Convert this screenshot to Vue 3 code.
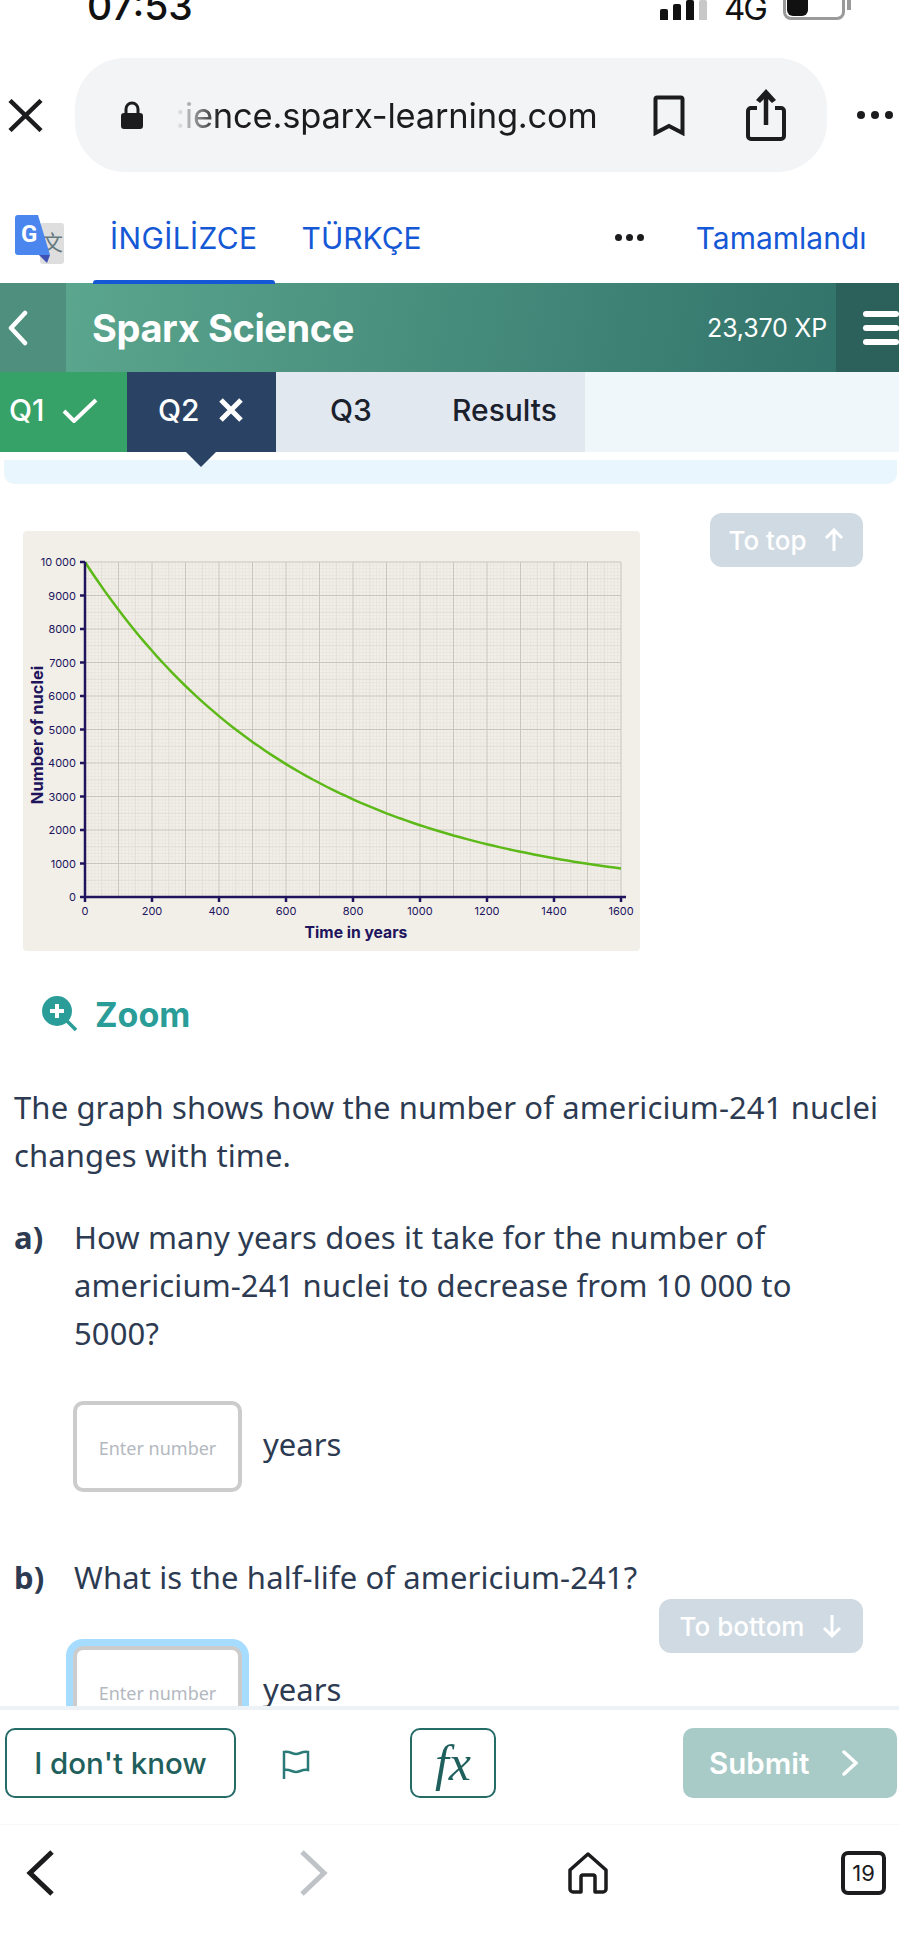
<template>
  <div class="page">
    <!-- phone status bar -->
    <div class="status">
      <span class="clock">07:53</span>
      <div class="signal">
        <i style="height: 11px"></i>
        <i style="height: 16px"></i>
        <i style="height: 20px"></i>
        <i class="off" style="height: 20px"></i>
      </div>
      <span class="net">4G</span>
      <div class="battery"><b></b></div>
      <div class="nub"></div>
    </div>

    <!-- browser address row -->
    <div class="browser">
      <svg class="close" width="35" height="33" viewBox="0 0 35 33">
        <path d="M2 1.5 33 31.5M33 1.5 2 31.5" stroke="#1c1c1e" stroke-width="4.5" fill="none" />
      </svg>
      <div class="pill">
        <svg width="24" height="28" viewBox="0 0 24 28">
          <path d="M6 13V8a6 6 0 0 1 12 0v5" stroke="#1c1c1e" stroke-width="3" fill="none" />
          <rect x="1" y="12" width="22" height="16" rx="3" fill="#1c1c1e" />
        </svg>
        <span class="url">:ience.sparx-learning.com</span>
        <svg class="bookmark" width="32" height="41" viewBox="0 0 32 41">
          <path d="M2.5 38V4a1.5 1.5 0 0 1 1.500-1.500h24a1.500 1.500 0 0 1 1.500 1.500v34L16 31z" fill="none" stroke="#1c1c1e" stroke-width="4" />
        </svg>
        <svg class="share" width="40" height="52" viewBox="0 0 40 52">
          <path d="M11 19H5a3 3 0 0 0-3 3v25a3 3 0 0 0 3 3h30a3 3 0 0 0 3-3V22a3 3 0 0 0-3-3h-6" fill="none" stroke="#1c1c1e" stroke-width="4" />
          <path d="M20 36V4" stroke="#1c1c1e" stroke-width="4.500" fill="none" />
          <path d="M20 0 30 11 26 14 20 8 14 14 10 11z" fill="#1c1c1e" />
        </svg>
      </div>
      <div class="dots big"><i></i><i></i><i></i></div>
    </div>

    <!-- page translation row -->
    <div class="translate">
      <div class="gt">
        <div class="gt-back">文</div>
        <div class="gt-front">G</div>
        <div class="gt-fold"></div>
      </div>
      <div class="lang active">İNGİLİZCE</div>
      <div class="lang second">TÜRKÇE</div>
      <div class="dots small"><i></i><i></i><i></i></div>
      <div class="done">Tamamlandı</div>
    </div>

    <!-- app header -->
    <div class="header">
      <div class="back">
        <svg width="22" height="36" viewBox="0 0 22 36">
          <path d="M18 3 4 18l14 15" fill="none" stroke="#fff" stroke-width="4.500" stroke-linecap="round" stroke-linejoin="round" />
        </svg>
      </div>
      <div class="brand">Sparx Science</div>
      <div class="xp">23,370 XP</div>
      <div class="menu"><i></i><i></i><i></i></div>
    </div>

    <!-- question tabs -->
    <div class="tabs">
      <div class="tab q1">
        <span>Q1</span>
        <svg width="36" height="25" viewBox="0 0 36 25">
          <path d="M2 13 12 23 34 2" fill="none" stroke="#fff" stroke-width="4" />
        </svg>
      </div>
      <div class="tab q2">
        <span>Q2</span>
        <svg width="26" height="24" viewBox="0 0 26 24">
          <path d="M3 2 23 22M23 2 3 22" fill="none" stroke="#fff" stroke-width="5" />
        </svg>
        <div class="caret"></div>
      </div>
      <div class="tab rest">
        <span class="q3">Q3</span>
        <span>Results</span>
      </div>
    </div>
    <div class="strip"></div>

    <!-- question body -->
    <div class="main">
      <button class="float to-top">To top
        <svg width="20" height="24" viewBox="0 0 20 24">
          <path d="M10 23V2M2 10l8-8 8 8" fill="none" stroke="#fff" stroke-width="3" />
        </svg>
      </button>
      <button class="float to-bottom">To bottom
        <svg width="20" height="24" viewBox="0 0 20 24">
          <path d="M10 1v21M2 14l8 8 8-8" fill="none" stroke="#fff" stroke-width="3" />
        </svg>
      </button>

      <svg class="graph" width="617" height="420" viewBox="0 0 617 420">
        <rect width="617" height="420" rx="4" fill="#f2efe9" />
        <path :d="gridFine" stroke="#eae6df" stroke-width="1" fill="none" />
        <path :d="gridMid" stroke="#e1ddd6" stroke-width="1" fill="none" />
        <path :d="gridMajor" stroke="#c8c5bf" stroke-width="1" fill="none" />
        <path :d="curve" stroke="#5cb917" stroke-width="2.500" fill="none" />
        <path :d="axes" stroke="#20145c" stroke-width="2.500" fill="none" />
        <text
          v-for="t in yTicks"
          :key="t.label"
          class="tick"
          x="53"
          :y="t.y + 4"
          text-anchor="end"
        >{{ t.label }}</text>
        <text
          v-for="t in xTicks"
          :key="t.label"
          class="tick"
          :x="t.x"
          y="384"
          text-anchor="middle"
        >{{ t.label }}</text>
        <text class="title" x="333" y="407" text-anchor="middle">Time in years</text>
        <text class="title tall" transform="translate(20 204) rotate(-90)" text-anchor="middle">Number of nuclei</text>
      </svg>

      <div class="zoom">
        <svg width="36" height="36" viewBox="0 0 36 36">
          <path d="M24 24 34 34" stroke="#2a9d99" stroke-width="3.500" fill="none" />
          <circle cx="15" cy="15" r="15" fill="#2a9d99" />
          <path d="M15 8v14M8 15h14" stroke="#fff" stroke-width="4" fill="none" />
        </svg>
        <span>Zoom</span>
      </div>

      <p class="intro">The graph shows how the number of americium-241 nuclei changes with time.</p>

      <div class="question first">
        <b>a)</b>
        <div>How many years does it take for the number of americium-241 nuclei to decrease from 10 000 to 5000?</div>
      </div>
      <div class="answer row-a">
        <input placeholder="Enter number" />
        <span>years</span>
      </div>

      <div class="question second-q">
        <b>b)</b>
        <div>What is the half-life of americium-241?</div>
      </div>
      <div class="answer row-b">
        <input class="focused" placeholder="Enter number" />
        <span>years</span>
      </div>
    </div>

    <!-- action bar -->
    <div class="actions">
      <button class="dont">I don't know</button>
      <svg class="flag" width="28" height="29" viewBox="0 0 28 29">
        <path d="M2 29V2c6-1 8 2 12 2s6-3 12-2v18c-6-1-8 2-12 2s-6-3-12-2" fill="none" stroke="#2a7a77" stroke-width="2.500" />
      </svg>
      <button class="fx">fx</button>
      <button class="submit">
        Submit
        <svg width="16" height="26" viewBox="0 0 16 26">
          <path d="M2 2 14 13 2 24" fill="none" stroke="#fff" stroke-width="3.500" stroke-linecap="round" />
        </svg>
      </button>
    </div>

    <!-- browser bottom bar -->
    <div class="nav">
      <svg class="nav-back" width="28" height="46" viewBox="0 0 28 46">
        <path d="M26 2 4 23l22 21" fill="none" stroke="#1c1c1e" stroke-width="5" />
      </svg>
      <svg class="nav-forward" width="28" height="46" viewBox="0 0 28 46">
        <path d="M2 2l22 21L2 44" fill="none" stroke="#bfc2c6" stroke-width="5" />
      </svg>
      <svg class="nav-home" width="40" height="42" viewBox="0 0 40 42">
        <path d="M2 18 20 2l18 16v19a3 3 0 0 1-3 3h-8V25a2 2 0 0 0-2-2H15a2 2 0 0 0-2 2v15H5a3 3 0 0 1-3-3z" fill="none" stroke="#1c1c1e" stroke-width="3.500" stroke-linejoin="round" />
      </svg>
      <div class="nav-tabs">19</div>
    </div>
  </div>
</template>

<script setup>
import { computed } from 'vue'

// plot area inside the graph card, in px
const left = 62
const right = 598
const top = 31
const bottom = 366
const perYear = (right - left) / 1600
const perNucleus = (bottom - top) / 10000

const xAt = (t) => left + t * perYear
const yAt = (n) => bottom - n * perNucleus

// grid lines every `step`, skipping the ones a heavier tier already draws
const gridPath = (xStep, yStep, skipX, skipY) => {
  let d = ''
  for (let t = 0; t <= 1600; t += xStep) {
    if (skipX && t % skipX === 0) continue
    d += `M${xAt(t).toFixed(1)} ${top}V${bottom}`
  }
  for (let n = 0; n <= 10000; n += yStep) {
    if (skipY && n % skipY === 0) continue
    d += `M${left} ${yAt(n).toFixed(1)}H${right}`
  }
  return d
}

const gridFine = gridPath(10, 100, 50, 500)
const gridMid = gridPath(50, 500, 100, 1000)
const gridMajor = gridPath(100, 1000)

const curve = computed(() => {
  const pts = []
  for (let t = 0; t <= 1600; t += 20) {
    const n = 10000 * Math.pow(2, -t / 450)
    pts.push(`${xAt(t).toFixed(1)} ${yAt(n).toFixed(1)}`)
  }
  return 'M' + pts.join('L')
})

const yTicks = [
  '0', '1000', '2000', '3000', '4000', '5000', '6000', '7000', '8000', '9000', '10 000'
].map((label, i) => ({ label, y: yAt(i * 1000) }))

const xTicks = [0, 200, 400, 600, 800, 1000, 1200, 1400, 1600].map((t) => ({
  label: String(t),
  x: xAt(t)
}))

const axes = computed(() => {
  let d = `M${left} ${top}V${bottom}H${right + 5}`
  yTicks.forEach((t) => {
    d += `M${left - 5} ${t.y.toFixed(1)}H${left}`
  })
  xTicks.forEach((t) => {
    d += `M${t.x.toFixed(1)} ${bottom}v5`
  })
  return d
})
</script>

<style>
body {
  background: #fff;
  overflow: hidden;
}
</style>

<style scoped>
.page {
  width: 899px;
  height: 1945px;
  display: flex;
  flex-direction: column;
  overflow: hidden;
  background: #fff;
  color: #2d3b52;
  font-family: "Noto Sans", sans-serif;
}

button {
  font-family: inherit;
}

/* ===== status bar, cut off by the top of the screen ===== */
.status {
  height: 21px;
  flex: none;
  display: flex;
  align-items: flex-end;
  overflow: hidden;
  color: #111;
  font-family: Inter, sans-serif;
}

.clock {
  flex: none;
  width: 110px;
  margin-left: 87px;
  margin-bottom: -5px;
  font-size: 39px;
  line-height: 40px;
  font-weight: 500;
}

.signal {
  margin-left: 463px;
  display: flex;
  align-items: flex-end;
  gap: 5px;
  height: 20px;
  margin-bottom: 1px;
}

.signal i {
  width: 8px;
  border-radius: 2px 2px 0 0;
  background: #111;
}

.signal i.off {
  background: #c8c8c8;
}

.net {
  flex: none;
  margin-left: 17px;
  width: 42px;
  margin-bottom: -4px;
  font-size: 33px;
  line-height: 34px;
  letter-spacing: -2px;
}

.battery {
  flex: none;
  margin-left: 17px;
  width: 62px;
  height: 32px;
  margin-bottom: 1px;
  border: 3px solid #9a9a9a;
  border-radius: 8px;
  padding: 1px;
  box-sizing: border-box;
  display: flex;
}

.battery b {
  width: 21px;
  background: #111;
  border-radius: 6px;
}

.nub {
  flex: none;
  width: 4px;
  height: 10px;
  background: #9a9a9a;
  align-self: flex-start;
  margin-left: 2px;
}

/* ===== browser bar ===== */
.browser {
  flex: none;
  margin-top: 37px;
  height: 114px;
  display: flex;
  align-items: center;
}

.close {
  margin-left: 8px;
}

.pill {
  margin-left: 32px;
  width: 752px;
  height: 114px;
  border-radius: 50px;
  background: #f3f4f6;
  display: flex;
  align-items: center;
  padding-left: 45px;
  box-sizing: border-box;
}

.url {
  margin-left: 31px;
  width: 422px;
  font-family: Inter, sans-serif;
  font-size: 34.5px;
  letter-spacing: -0.2px;
  color: #1c1c1e;
  white-space: nowrap;
  -webkit-mask-image: linear-gradient(90deg, transparent 0, #000 45px);
  mask-image: linear-gradient(90deg, transparent 0, #000 45px);
}

.bookmark {
  margin-left: 56px;
}

.share {
  margin-left: 61px;
}

.dots {
  display: flex;
}

.dots i {
  border-radius: 50%;
  background: #1c1c1e;
}

.dots.big {
  margin-left: 30px;
  gap: 6px;
}

.dots.big i {
  width: 8px;
  height: 8px;
}

/* ===== translate bar ===== */
.translate {
  flex: none;
  height: 111px;
  padding-top: 20px;
  box-sizing: border-box;
  display: flex;
  align-items: center;
  font-family: Inter, sans-serif;
  font-size: 30px;
  color: #1558d6;
}

.gt {
  position: relative;
  width: 50px;
  height: 49px;
  margin-left: 15px;
  margin-top: 4px;
}

.gt-back {
  position: absolute;
  left: 25px;
  top: 8px;
  width: 24px;
  height: 41px;
  background: #dedede;
  border-radius: 3px;
  color: #66797e;
  font-family: "Noto Sans CJK SC", sans-serif;
  font-size: 21px;
  line-height: 36px;
  text-align: right;
  padding-right: 1px;
  box-sizing: border-box;
}

.gt-front {
  position: absolute;
  left: 0;
  top: 0;
  width: 35px;
  height: 40px;
  background: #4a86ee;
  border-radius: 3px 0 0 3px;
  clip-path: polygon(0 0, 23px 0, 35px 100%, 0 100%);
  color: #fff;
  font-family: Roboto, sans-serif;
  font-weight: 700;
  font-size: 24px;
  line-height: 38px;
  padding-left: 6px;
  box-sizing: border-box;
}

.gt-fold {
  position: absolute;
  left: 24px;
  top: 40px;
  width: 0;
  height: 0;
  border-top: 8px solid #3f51b5;
  border-left: 8px solid transparent;
  border-right: 3px solid transparent;
}

.lang {
  white-space: nowrap;
}

.lang.active {
  margin-left: 45px;
  position: relative;
  letter-spacing: 0.4px;
}

.lang.active::after {
  content: "";
  position: absolute;
  left: -17px;
  width: 182px;
  bottom: -28px;
  height: 4px;
  border-radius: 3px 3px 0 0;
  background: #1558d6;
}

.lang.second {
  margin-left: 44px;
}

.dots.small {
  margin-left: 193px;
  gap: 4px;
}

.dots.small i {
  width: 7px;
  height: 7px;
}

.done {
  margin-left: 52px;
}

/* ===== app header ===== */
.header {
  flex: none;
  height: 89px;
  display: flex;
  align-items: center;
  background: linear-gradient(100deg, #5eaa90, #2f6f68);
  color: #fff;
  font-family: Inter, sans-serif;
}

.back {
  width: 66px;
  height: 100%;
  background: #4e8f7d;
  display: flex;
  align-items: center;
  padding-left: 7px;
  box-sizing: border-box;
}

.brand {
  margin-left: 26px;
  font-size: 38px;
  font-weight: 700;
  letter-spacing: -0.4px;
}

.xp {
  margin-left: auto;
  margin-right: 9px;
  font-size: 25px;
  letter-spacing: -0.2px;
}

.menu {
  width: 63px;
  height: 100%;
  background: #2b605b;
  display: flex;
  flex-direction: column;
  justify-content: center;
  gap: 8px;
  padding-left: 27px;
  box-sizing: border-box;
}

.menu i {
  width: 36px;
  height: 6px;
  border-radius: 3px;
  background: #fff;
}

/* ===== tabs ===== */
.tabs {
  flex: none;
  height: 80px;
  display: flex;
  background: #f0f7fa;
  font-family: Inter, sans-serif;
  font-size: 30px;
  font-weight: 500;
}

.tab {
  display: flex;
  align-items: center;
  box-sizing: border-box;
  padding-bottom: 4px;
}

.q1 {
  width: 127px;
  background: #37a267;
  color: #fff;
  padding-left: 9px;
  gap: 17px;
}

.q2 {
  position: relative;
  width: 149px;
  background: #2a4365;
  color: #fff;
  padding-left: 31px;
  gap: 18px;
}

.caret {
  position: absolute;
  left: 59px;
  top: 100%;
  border-top: 15px solid #2a4365;
  border-left: 15px solid transparent;
  border-right: 15px solid transparent;
  z-index: 2;
}

.rest {
  width: 309px;
  background: #e2e8f0;
  color: #1a202c;
  padding-left: 54px;
}

.q3 {
  width: 122px;
}

.strip {
  flex: none;
  margin: 8px 2px 0 4px;
  height: 24px;
  background: #e9f6fd;
  border-radius: 0 0 10px 10px;
}

/* ===== question body ===== */
.main {
  flex: none;
  height: 1222px;
  position: relative;
  overflow: hidden;
  padding-top: 47px;
  box-sizing: border-box;
}

.float {
  position: absolute;
  right: 36px;
  height: 54px;
  border: none;
  border-radius: 12px;
  background: #d0dae3;
  color: #fff;
  font-size: 26px;
  font-weight: 500;
  font-family: Inter, sans-serif;
  display: flex;
  align-items: center;
  justify-content: center;
  gap: 18px;
  padding: 0;
}

.to-top {
  top: 29px;
  width: 153px;
}

.to-bottom {
  top: 1115px;
  width: 204px;
}

.graph {
  display: block;
  margin-left: 23px;
}

.tick {
  font-family: Inter, sans-serif;
  font-size: 11px;
  fill: #20145c;
}

.title {
  font-family: Inter, sans-serif;
  font-size: 15.700px;
  font-weight: 700;
  fill: #20145c;
}

.title.tall {
  font-size: 16.500px;
}

.zoom {
  margin: 45px 0 0 42px;
  display: flex;
  align-items: center;
  gap: 17px;
  height: 36px;
  color: #2a9d99;
  font-family: Inter, sans-serif;
  font-size: 34px;
  font-weight: 700;
}

.intro {
  margin: 51px 14px 0;
  font-size: 31px;
  letter-spacing: 0.12px;
  line-height: 48px;
}

.question {
  display: flex;
  margin-left: 14px;
  margin-right: 20px;
  font-size: 31px;
  letter-spacing: 0.12px;
  line-height: 48px;
}

.question b {
  flex: none;
  width: 60px;
}

.question.first {
  margin-top: 34px;
}

.question.second-q {
  margin-top: 61px;
}

.answer {
  display: flex;
  align-items: center;
  gap: 21px;
  margin-left: 73px;
  font-size: 31px;
}

.answer span {
  margin-top: -6px;
}

.answer input {
  width: 169px;
  height: 91px;
  flex: none;
  box-sizing: border-box;
  border: 4px solid #cccccc;
  border-radius: 10px;
  background: #fff;
  text-align: center;
  padding: 3px 0 0;
  font-size: 18px;
  font-family: "Noto Sans", sans-serif;
  outline: none;
}

.answer input::placeholder {
  color: #b3b8bf;
  opacity: 1;
}

.answer input.focused {
  box-shadow: 0 0 0 7px #a6dcff;
}

.row-a {
  margin-top: 44px;
}

.row-b {
  margin-top: 45px;
}

/* ===== action bar ===== */
.actions {
  flex: none;
  height: 119px;
  border-top: 4px solid #edf2f7;
  border-bottom: 1px solid #f7f7f7;
  display: flex;
  align-items: flex-start;
  box-sizing: border-box;
  padding: 18px 2px 0 5px;
}

.actions button {
  height: 70px;
  border-radius: 10px;
  font-size: 29.500px;
  font-weight: 500;
  font-family: Inter, sans-serif;
  padding: 0;
}

.dont {
  width: 231px;
  background: #fff;
  border: 2px solid #256b68;
  color: #1f5f5c;
}

.flag {
  margin: 22px 0 0 46px;
}

.actions .fx {
  margin-left: 100px;
  width: 86px;
  background: #fff;
  border: 2px solid #256b68;
  color: #1f5f5c;
  font-family: "Liberation Serif", serif;
  font-style: italic;
  font-size: 50px;
  line-height: 1;
}

.actions .submit {
  margin-left: auto;
  width: 214px;
  background: #a9cbc8;
  border: none;
  color: #fff;
  display: flex;
  align-items: center;
  gap: 33px;
  padding-left: 26px;
  font-weight: 600;
}

/* ===== bottom nav ===== */
.nav {
  flex: 1;
  display: flex;
  align-items: center;
  padding: 0 0 24px 26px;
  box-sizing: border-box;
}

.nav-forward {
  margin-left: 246px;
}

.nav-home {
  margin-left: 240px;
}

.nav-tabs {
  margin-left: 233px;
  width: 45px;
  height: 44px;
  border: 4px solid #1c1c1e;
  border-radius: 7px;
  box-sizing: border-box;
  font-family: Inter, sans-serif;
  font-size: 22px;
  line-height: 36px;
  text-align: center;
  color: #1c1c1e;
}
</style>
